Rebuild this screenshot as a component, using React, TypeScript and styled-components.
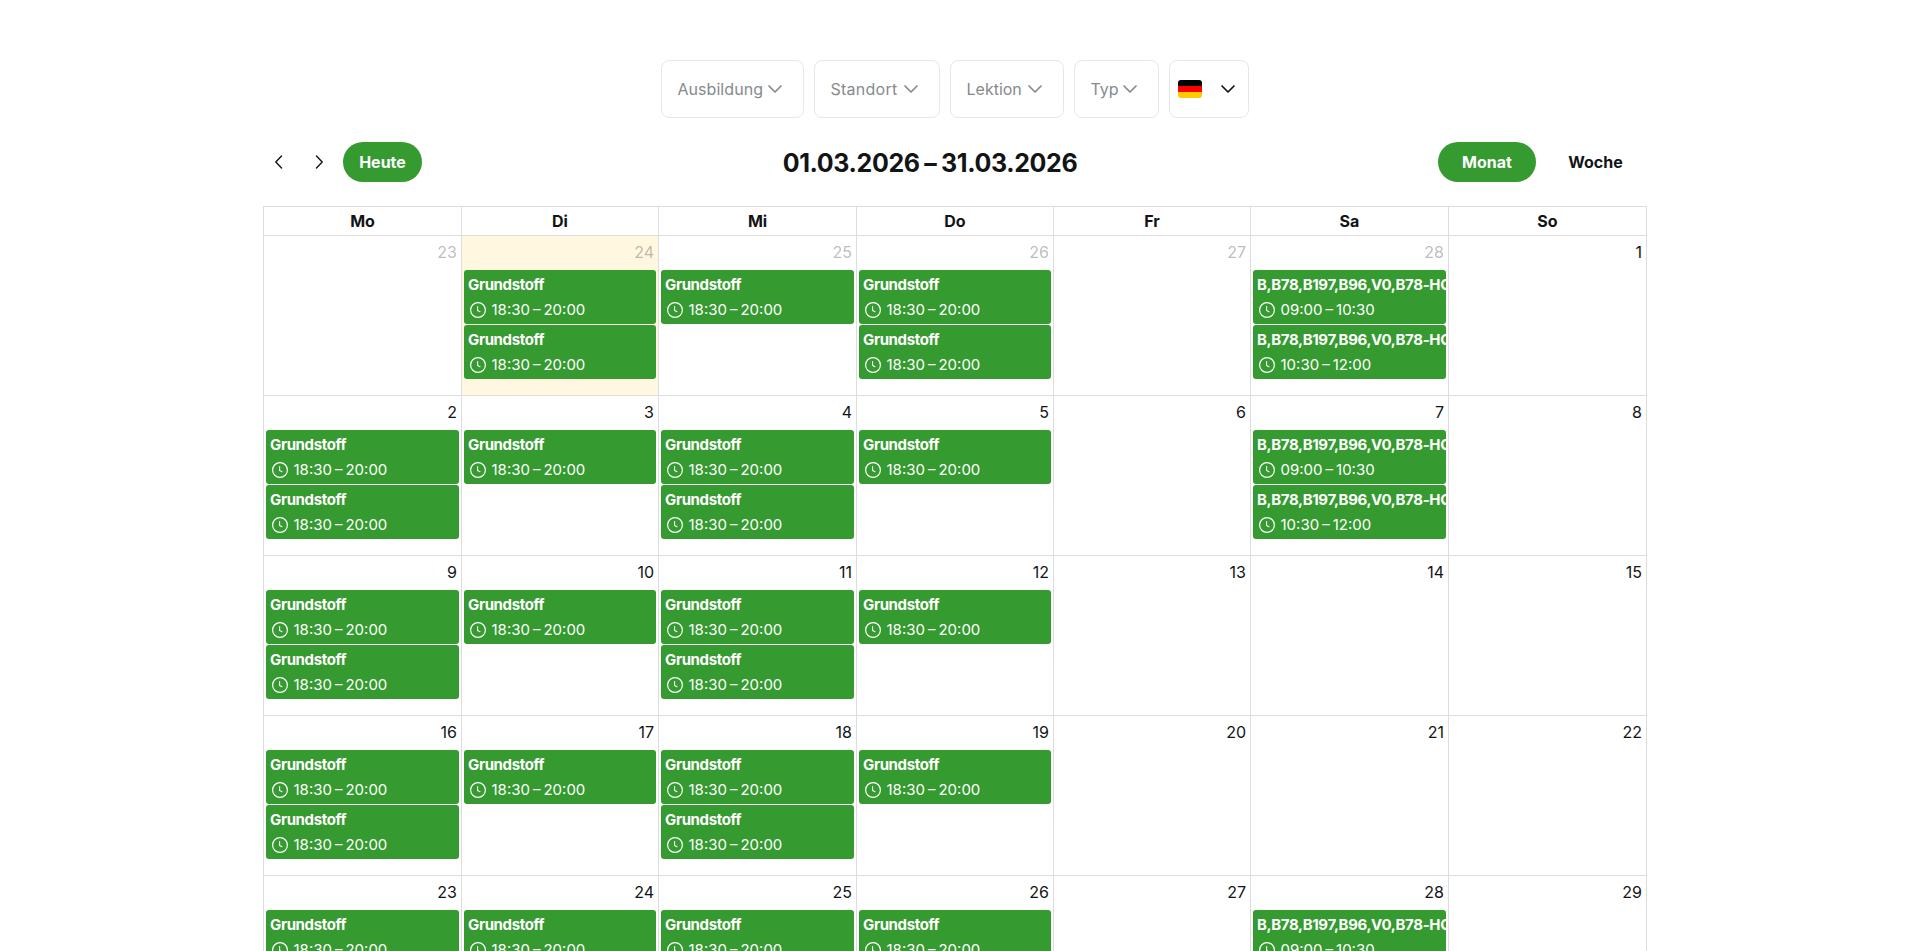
import React from 'react';
import styled, { createGlobalStyle } from 'styled-components';

interface CalendarEvent {
  title: string;
  time: string;
}

interface Day {
  date: number;
  outside?: boolean;
  today?: boolean;
  events: CalendarEvent[];
}

const FILTERS = [
  { label: 'Ausbildung', width: 143, spacing: 0.05 },
  { label: 'Standort', width: 126, spacing: 0.25 },
  { label: 'Lektion', width: 114, spacing: 0 },
  { label: 'Typ', width: 85, spacing: 0 },
];

const WEEKDAYS = ['Mo', 'Di', 'Mi', 'Do', 'Fr', 'Sa', 'So'];

const evening: CalendarEvent = { title: 'Grundstoff', time: '18:30 – 20:00' };
const saturday: CalendarEvent[] = [
  { title: 'B,B78,B197,B96,V0,B78-HGB', time: '09:00 – 10:30' },
  { title: 'B,B78,B197,B96,V0,B78-HGB', time: '10:30 – 12:00' },
];

const WEEKS: Day[][] = [
  [
    { date: 23, outside: true, events: [] },
    { date: 24, outside: true, today: true, events: [evening, evening] },
    { date: 25, outside: true, events: [evening] },
    { date: 26, outside: true, events: [evening, evening] },
    { date: 27, outside: true, events: [] },
    { date: 28, outside: true, events: saturday },
    { date: 1, events: [] },
  ],
  [
    { date: 2, events: [evening, evening] },
    { date: 3, events: [evening] },
    { date: 4, events: [evening, evening] },
    { date: 5, events: [evening] },
    { date: 6, events: [] },
    { date: 7, events: saturday },
    { date: 8, events: [] },
  ],
  ...[9, 16].map((first) => [
    { date: first, events: [evening, evening] },
    { date: first + 1, events: [evening] },
    { date: first + 2, events: [evening, evening] },
    { date: first + 3, events: [evening] },
    { date: first + 4, events: [] },
    { date: first + 5, events: [] },
    { date: first + 6, events: [] },
  ]),
  [
    { date: 23, events: [evening, evening] },
    { date: 24, events: [evening] },
    { date: 25, events: [evening, evening] },
    { date: 26, events: [evening] },
    { date: 27, events: [] },
    { date: 28, events: saturday },
    { date: 29, events: [] },
  ],
];

const App = () => (
  <>
    <GlobalStyle />
    <Page>
      <Filters />
      <Toolbar />
      <Calendar />
    </Page>
  </>
);

const Filters = () => (
  <FilterBar>
    {FILTERS.map(({ label, width, spacing }) => (
      <FilterButton key={label} $width={width}>
        <FilterLabel $spacing={spacing}>{label}</FilterLabel>
        <ChevronDown />
      </FilterButton>
    ))}
    <LanguageButton aria-label="Deutsch">
      <GermanFlag />
      <ChevronDown />
    </LanguageButton>
  </FilterBar>
);

const Toolbar = () => (
  <StyledToolbar>
    <ToolbarGroup>
      <ArrowButton aria-label="Zurück">
        <Arrow d="M6.5 1L0.8 7L6.5 13" />
      </ArrowButton>
      <ArrowButton aria-label="Weiter">
        <Arrow d="M1.5 1L7.2 7L1.5 13" />
      </ArrowButton>
      <TodayButton>Heute</TodayButton>
    </ToolbarGroup>
    <Title>01.03.2026 – 31.03.2026</Title>
    <ViewSwitch>
      <ViewButton $active>Monat</ViewButton>
      <ViewButton>Woche</ViewButton>
    </ViewSwitch>
  </StyledToolbar>
);

const Calendar = () => (
  <StyledCalendar>
    <HeaderRow>
      {WEEKDAYS.map((weekday) => (
        <HeaderCell key={weekday}>{weekday}</HeaderCell>
      ))}
    </HeaderRow>
    {WEEKS.map((week, index) => (
      <WeekRow key={index}>
        {week.map((day) => (
          <DayCell key={day.date} $today={day.today}>
            <DayNumber $outside={day.outside}>{day.date}</DayNumber>
            {day.events.map((event, i) => (
              <Event key={i}>
                <EventTitle>{event.title}</EventTitle>
                <EventTime>
                  <Clock />
                  <span>{event.time}</span>
                </EventTime>
              </Event>
            ))}
          </DayCell>
        ))}
      </WeekRow>
    ))}
  </StyledCalendar>
);

const ChevronDown = () => (
  <svg width="16" height="10" viewBox="0 0 16 10" fill="none">
    <path d="M2 2L8 8L14 2" stroke="currentColor" strokeWidth="1.7" strokeLinecap="round" strokeLinejoin="round" />
  </svg>
);

const Arrow = ({ d }: { d: string }) => (
  <svg width="8" height="14" viewBox="0 0 8 14" fill="none">
    <path d={d} stroke="currentColor" strokeWidth="1.4" strokeLinecap="round" strokeLinejoin="round" />
  </svg>
);

const GermanFlag = () => (
  <Flag viewBox="0 0 24 18">
    <path fill="#000" d="M0 0h24v6H0z" />
    <path fill="#f00" d="M0 6h24v6H0z" />
    <path fill="#fc0" d="M0 12h24v6H0z" />
  </Flag>
);

const Clock = () => (
  <svg width="16" height="16" viewBox="0 0 16 16" fill="none" stroke="currentColor">
    <circle cx="8" cy="8" r="7.4" strokeWidth="1.2" />
    <path d="M7.6 4.6V8.6L10 9.8" strokeWidth="1.1" strokeLinecap="round" strokeLinejoin="round" />
  </svg>
);

const GlobalStyle = createGlobalStyle`
  body {
    margin: 0;
    overflow: hidden;
    background-color: #fff;
    color: #121416;
    font-family: Inter, 'Liberation Sans', sans-serif;
  }

  *,
  *::before,
  *::after {
    box-sizing: border-box;
  }

  button {
    padding: 0;
    border: none;
    background: none;
    color: inherit;
    font: inherit;
  }
`;

const Page = styled.main`
  width: 1384px;
  height: 951px;
  margin: 0 auto;
  padding-top: 60px;
  overflow: hidden;
`;

const FilterBar = styled.div`
  display: flex;
  justify-content: center;
  gap: 10px;
`;

const FilterButton = styled.button<{ $width: number }>`
  display: flex;
  align-items: center;
  justify-content: space-between;
  width: ${({ $width }) => $width}px;
  height: 58px;
  padding: 0 20px 0 15.5px;
  border: 1px solid #e5e7ea;
  border-radius: 8px;
  color: #868a8d;
  font-size: 16px;
`;

const FilterLabel = styled.span<{ $spacing: number }>`
  letter-spacing: ${({ $spacing }) => $spacing}px;
  white-space: nowrap;
`;

const LanguageButton = styled(FilterButton).attrs({ $width: 80 })`
  padding: 0 12px 0 8px;
  color: #121416;
`;

const Flag = styled.svg`
  width: 24px;
  height: 18px;
  border-radius: 3px;
`;

const StyledToolbar = styled.div`
  display: flex;
  align-items: center;
  justify-content: space-between;
  height: 40px;
  margin: 24px 0;
`;

const ToolbarGroup = styled.div`
  display: flex;
  align-items: center;
`;

const ViewSwitch = styled(ToolbarGroup)`
  gap: 8px;
`;

const ArrowButton = styled.button`
  display: flex;
  align-items: center;
  justify-content: center;
  width: 32px;
  height: 40px;
  margin-right: 8px;
`;

const TodayButton = styled.button`
  width: 79px;
  height: 40px;
  border-radius: 20px;
  background-color: #359a2f;
  color: #fff;
  font-size: 16px;
  font-weight: 700;
`;

const Title = styled.h2`
  margin: 0;
  padding-top: 2px;
  font-size: 25px;
  font-weight: 650;
  letter-spacing: -0.36px;
  word-spacing: -1px;
  white-space: nowrap;
`;

const ViewButton = styled.button<{ $active?: boolean }>`
  width: ${({ $active }) => ($active ? 98 : 103)}px;
  height: 40px;
  border-radius: 20px;
  background-color: ${({ $active }) => ($active ? '#359a2f' : 'transparent')};
  color: ${({ $active }) => ($active ? '#fff' : 'inherit')};
  font-size: 16px;
  font-weight: 700;
`;

const StyledCalendar = styled.div`
  border-top: 1px solid #ddd;
  border-left: 1px solid #ddd;
`;

const WeekRow = styled.div`
  display: grid;
  grid-template-columns: 198px 197px 198px 197px 197px 198px 198px;
  height: 160px;
`;

const HeaderRow = styled(WeekRow)`
  height: 29px;
`;

const HeaderCell = styled.div`
  border-right: 1px solid #ddd;
  border-bottom: 1px solid #ddd;
  font-size: 16px;
  font-weight: 650;
  line-height: 28px;
  text-align: center;
`;

const DayCell = styled.div<{ $today?: boolean }>`
  min-width: 0;
  padding: 0 2px;
  border-right: 1px solid #ddd;
  border-bottom: 1px solid #ddd;
  background-color: ${({ $today }) => ($today ? '#fff7df' : 'transparent')};
`;

const DayNumber = styled.div<{ $outside?: boolean }>`
  height: 34px;
  padding-right: 2px;
  color: ${({ $outside }) => ($outside ? 'rgba(18, 20, 22, 0.3)' : 'inherit')};
  font-size: 16px;
  line-height: 33px;
  text-align: right;
`;

const Event = styled.div`
  height: 54px;
  margin-bottom: 1px;
  padding-left: 4px;
  overflow: hidden;
  border-radius: 3px;
  background-color: #359a2f;
  color: #fff;
  font-size: 15px;
  white-space: nowrap;
`;

const EventTitle = styled.div`
  height: 28px;
  font-weight: 700;
  letter-spacing: -0.36px;
  line-height: 30px;
`;

const EventTime = styled.div`
  display: flex;
  align-items: center;
  gap: 5.5px;
  height: 24px;
  padding-left: 2px;
  line-height: 24px;
  word-spacing: -1.2px;

  span {
    height: 24px;
  }
`;

export default App;
